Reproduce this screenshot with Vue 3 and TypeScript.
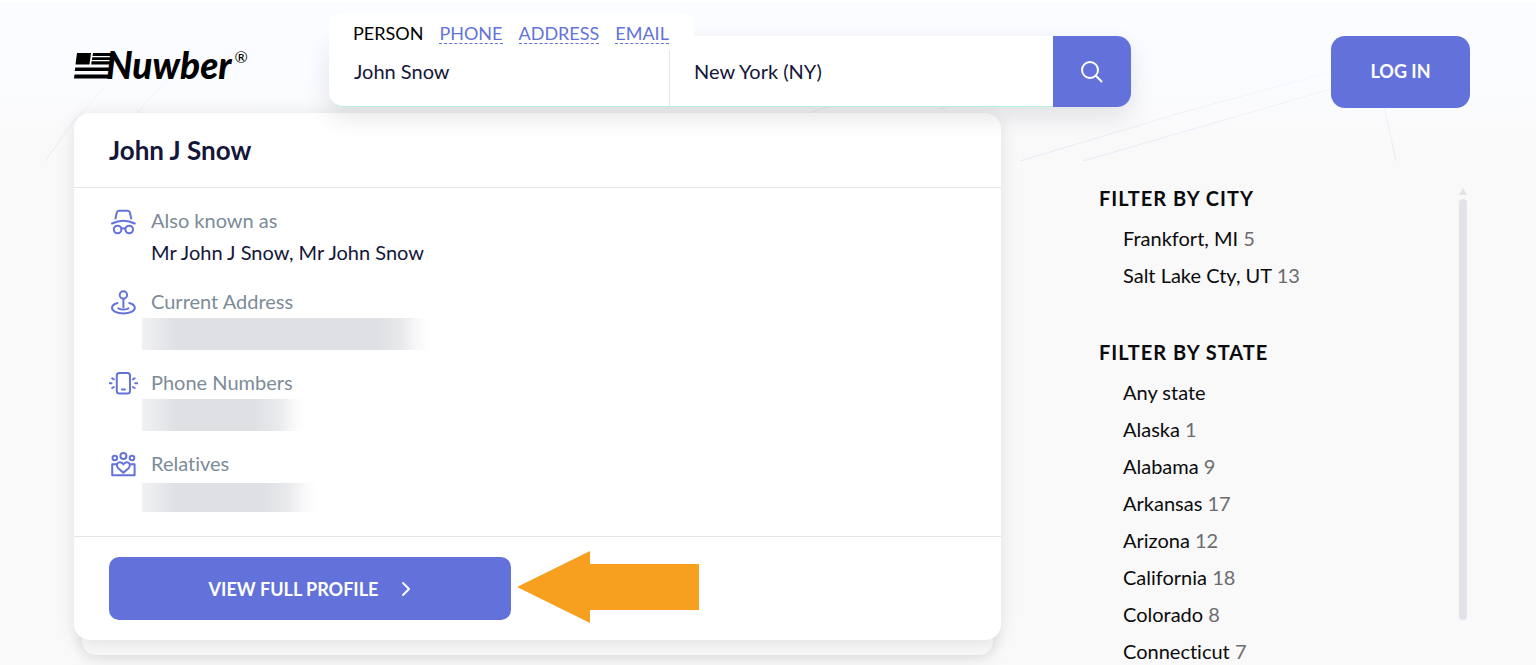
<script setup lang="ts">
import { ref } from 'vue'

interface Filter {
  label: string
  count?: number
}

const person = ref('John Snow')
const region = ref('New York (NY)')

const searchTabs: string[] = ['PHONE', 'ADDRESS', 'EMAIL']

const cities: Filter[] = [
  { label: 'Frankfort, MI', count: 5 },
  { label: 'Salt Lake Cty, UT', count: 13 },
]

const states: Filter[] = [
  { label: 'Any state' },
  { label: 'Alaska', count: 1 },
  { label: 'Alabama', count: 9 },
  { label: 'Arkansas', count: 17 },
  { label: 'Arizona', count: 12 },
  { label: 'California', count: 18 },
  { label: 'Colorado', count: 8 },
  { label: 'Connecticut', count: 7 },
]
</script>

<template>
  <div class="page">
    <svg class="backdrop" viewBox="0 0 1536 170" preserveAspectRatio="none" aria-hidden="true">
      <defs>
        <linearGradient id="trace" gradientUnits="userSpaceOnUse" x1="0" y1="70" x2="0" y2="162">
          <stop offset="0" stop-color="#e6e7f7" stop-opacity="0.2" />
          <stop offset="1" stop-color="#e6e7f7" />
        </linearGradient>
      </defs>
      <path d="M45 161L74 121L106 86M137 113L166 81" />
      <path d="M1020 161L1180 113L1331 72M1083 161L1331 89M1384 106L1396 161" />
      <path d="M800 116L830 106M940 106L950 116" />
    </svg>

    <header class="header">
      <a class="logo" href="#" aria-label="Nuwber">
        <svg class="flag" width="38" height="28" viewBox="0 0 38 28" aria-hidden="true">
          <path d="M3 1H17L15.500 12.500H1.500Z" />
          <path d="M19 1H38V4H18.500ZM18.300 5.300H38V8H17.900ZM17.600 9.300H38V12.500H17.200ZM1.200 15.500H38V19H.8ZM.5 22.500H38V26.500H0Z" />
        </svg>
        <span class="wordmark">Nuwber</span>
        <span class="registered">®</span>
      </a>

      <form class="search" @submit.prevent>
        <nav class="tabs" aria-label="Search type">
          <span class="tab current">PERSON</span>
          <a v-for="tab in searchTabs" :key="tab" class="tab" href="#">{{ tab }}</a>
        </nav>
        <input v-model="person" class="field name" type="text" aria-label="Name" />
        <input v-model="region" class="field region" type="text" aria-label="State" />
        <button class="submit" type="submit" aria-label="Search">
          <svg width="24" height="24" viewBox="0 0 24 24" aria-hidden="true">
            <circle cx="10" cy="10" r="8" />
            <path d="M15.800 15.800L21.500 21.500" />
          </svg>
        </button>
      </form>

      <button class="login" type="button">LOG IN</button>
    </header>

    <main class="content">
      <div class="stack">
        <article class="card">
          <h1 class="person">John J Snow</h1>

          <div class="details">
            <section class="row">
              <svg class="icon" width="29" height="28" viewBox="0 0 29 28" aria-hidden="true">
                <path d="M6.500 11.500L7.800 5.500Q8.200 3.700 10 3.700H18.700Q20.500 3.700 20.900 5.500L22.200 11.500" />
                <path d="M3 16.500Q14.400 11 25.800 16.500" />
                <circle cx="8.600" cy="22.500" r="3.800" />
                <circle cx="20.200" cy="22.500" r="3.800" />
                <path d="M12.400 22Q14.400 20.500 16.400 22" />
              </svg>
              <h2 class="label">Also known as</h2>
              <p class="value">Mr John J Snow, Mr John Snow</p>
            </section>

            <section class="row">
              <svg class="icon" width="29" height="28" viewBox="0 0 29 28" aria-hidden="true">
                <circle cx="14.400" cy="7" r="3.700" />
                <path d="M14.400 10.700V19.300" />
                <path d="M8.500 15Q3 16.600 3 19.800C3 23.200 8 25.500 14.400 25.500S25.800 23.200 25.800 19.800Q25.800 16.600 20.300 15" />
                <path d="M9.300 20.300Q14.400 22.900 19.500 20.300" />
              </svg>
              <h2 class="label">Current Address</h2>
              <div class="hidden-value address"></div>
            </section>

            <section class="row">
              <svg class="icon" width="29" height="28" viewBox="0 0 29 28" aria-hidden="true">
                <rect x="7.800" y="4" width="13.200" height="20.600" rx="2.500" />
                <path d="M12.900 20.500H15.900M3.200 9.400L4.800 10.300M.5 14.200H2.600M3.200 19L4.800 18M25.600 9.400L24 10.300M28.300 14.200H26.200M25.600 19L24 18" />
              </svg>
              <h2 class="label">Phone Numbers</h2>
              <div class="hidden-value phone"></div>
            </section>

            <section class="row">
              <svg class="icon" width="29" height="28" viewBox="0 0 29 28" aria-hidden="true">
                <circle cx="14.400" cy="6" r="3" />
                <circle cx="5.800" cy="8" r="2.300" />
                <circle cx="23" cy="8" r="2.300" />
                <path d="M7.300 14.300H3.200V25.300H25.600V14.300H21.500" />
                <path d="M14.400 22.800L9.200 18.200C6.600 15.400 8.200 12.200 10.900 12.200Q13.300 12.200 14.400 14.400Q15.500 12.200 17.900 12.200C20.600 12.200 22.200 15.400 19.600 18.200Z" />
              </svg>
              <h2 class="label">Relatives</h2>
              <div class="hidden-value relatives"></div>
            </section>
          </div>

          <footer class="actions">
            <button class="view" type="button">
              VIEW FULL PROFILE
              <svg width="10" height="16" viewBox="0 0 10 16" aria-hidden="true">
                <path d="M2 2L8 8L2 14" />
              </svg>
            </button>
            <svg class="arrow" width="182" height="72" viewBox="0 0 182 72" aria-hidden="true">
              <path d="M0 36L73 0V13H182V59H73V72Z" />
            </svg>
          </footer>
        </article>
        <div class="under-card"></div>
      </div>

      <aside class="sidebar">
        <div class="filters">
          <h2 class="filter-title">FILTER BY CITY</h2>
          <ul class="filter-list">
            <li v-for="item in cities" :key="item.label">
              <a href="#">{{ item.label }} <span class="count">{{ item.count }}</span></a>
            </li>
          </ul>
          <h2 class="filter-title">FILTER BY STATE</h2>
          <ul class="filter-list">
            <li v-for="item in states" :key="item.label">
              <a href="#">{{ item.label }} <span v-if="item.count" class="count">{{ item.count }}</span></a>
            </li>
          </ul>
        </div>
        <div class="scroller" aria-hidden="true">
          <svg width="8" height="7" viewBox="0 0 8 7"><path d="M4 0L8 7H0Z" /></svg>
          <div class="thumb"></div>
        </div>
      </aside>
    </main>
  </div>
</template>

<style>
body {
  margin: 0;
}
</style>

<style scoped>
.page {
  position: relative;
  box-sizing: border-box;
  height: 100vh;
  overflow: hidden;
  padding: 36px 66px 0 74px;
  background: linear-gradient(#fff 0, #fff 2px, #fbfcff 3px, #fbfcff 80px, #f9f9f9 150px);
  font-family: Lato, "Liberation Sans", sans-serif;
  font-size: 20px;
  font-variant-ligatures: none;
  color: #14163a;
}

.page * {
  box-sizing: border-box;
}

button,
input {
  margin: 0;
  border: 0;
  font: inherit;
}

a {
  color: inherit;
  text-decoration: none;
}

h1,
h2,
p,
ul {
  margin: 0;
  padding: 0;
}

.backdrop {
  position: absolute;
  top: 0;
  left: 0;
  width: 100%;
  height: 170px;
  fill: none;
  stroke: url(#trace);
  stroke-width: 1;
}

.header {
  position: relative;
  z-index: 2;
  display: flex;
  align-items: flex-start;
}

.logo {
  display: flex;
  flex: 0 0 255px;
  align-items: center;
  height: 60px;
  color: #000;
}

.wordmark {
  margin-left: -6px;
  font-size: 37px;
  font-style: italic;
  font-weight: 900;
  line-height: 40px;
  padding-bottom: 2px;
}

.registered {
  align-self: flex-start;
  margin: 11px 0 0 3px;
  font-size: 16px;
  line-height: 20px;
}

.search {
  position: relative;
  display: flex;
  flex: 0 1 802px;
  height: 71px;
  border-radius: 14px;
  box-shadow: 0 10px 24px rgba(40, 44, 60, 0.12);
}

.tabs {
  position: absolute;
  top: -23px;
  left: 0;
  display: flex;
  gap: 16px;
  height: 37px;
  padding: 8px 25px 0 24px;
  border-radius: 12px 12px 0 0;
  background: #fff;
  font-size: 18px;
}

.tab {
  height: 23px;
  border-bottom: 1px dashed #6473da;
  color: #6473da;
  line-height: 24px;
}

.tab.current {
  border-color: transparent;
  color: #000;
}

.field {
  min-width: 0;
  height: 71px;
  padding: 0 25px;
  border-bottom: 1px solid #b4efe0;
  background: #fff;
  color: #14163a;
}

.name {
  flex: 0 1 340px;
  border-bottom-left-radius: 14px;
}

.region {
  flex: 1 1 384px;
  background: linear-gradient(#e6e7ee, #e6e7ee) 0 14px / 1px 100% no-repeat #fff;
}

.submit {
  display: flex;
  flex: 0 0 78px;
  align-items: center;
  justify-content: center;
  border-radius: 0 14px 14px 0;
  background: #6272da;
}

.submit svg,
.view svg {
  fill: none;
  stroke: #fff;
  stroke-width: 2;
  stroke-linecap: round;
  stroke-linejoin: round;
}

.login {
  flex: 0 0 139px;
  height: 72px;
  margin-left: auto;
  padding: 0 0 2px;
  border-radius: 14px;
  background: #6272da;
  color: #fff;
  font-size: 18px;
  font-weight: 700;
}

.content {
  position: relative;
  z-index: 1;
  display: grid;
  grid-template-columns: 927fr 371fr;
  gap: 98px;
  align-items: start;
  margin-top: 5px;
}

.card {
  position: relative;
  z-index: 1;
  border-radius: 16px;
  background: #fff;
  box-shadow: 0 2px 18px rgba(0, 0, 0, 0.1);
}

.person {
  padding: 17px 35px 16px;
  border-bottom: 1px solid #e4e5e7;
  font-size: 26px;
  font-weight: 700;
  line-height: 41px;
}

.details {
  display: grid;
  gap: 17px;
  padding: 17px 35px 24px;
}

.row {
  display: grid;
  grid-template-columns: 29px 1fr;
  grid-template-rows: 32px 32px;
  column-gap: 13px;
}

.icon {
  grid-row: span 2;
  margin-top: 2px;
  fill: none;
  stroke: #6473da;
  stroke-width: 2;
  stroke-linecap: round;
  stroke-linejoin: round;
}

.label {
  color: #7d8b99;
  font-size: 20px;
  font-weight: 400;
  line-height: 30px;
}

.value {
  line-height: 30px;
}

.hidden-value {
  height: 32px;
  margin-left: -9px;
  background: linear-gradient(90deg, #f1f1f3 0, #ebecee 12px, #dfe0e4 34px, #dfe0e4 calc(100% - 52px), #e9eaec calc(100% - 28px), #f9f9fa calc(100% - 12px), #fff 100%);
}

.address {
  width: 288px;
}

.phone {
  width: 164px;
}

.relatives {
  align-self: end;
  width: 174px;
  height: 29px;
}

.actions {
  display: flex;
  gap: 6px;
  align-items: center;
  padding: 20px 35px;
  border-top: 1px solid #e4e5e7;
}

.view {
  display: flex;
  flex: 0 1 402px;
  gap: 23px;
  align-items: center;
  justify-content: center;
  height: 63px;
  border-radius: 10px;
  background: #6272da;
  color: #fff;
  font-size: 18px;
  font-weight: 700;
}

.arrow {
  flex: none;
  margin: -8px 0 -4px;
  fill: #f7a01f;
}

.under-card {
  height: 30px;
  margin: -15px 8px 0;
  border-radius: 14px;
  background: #f8f8f8;
  box-shadow: 0 2px 16px rgba(0, 0, 0, 0.14);
}

.sidebar {
  display: flex;
  justify-content: space-between;
  margin-top: 69px;
  padding-right: 3px;
  color: #0b0b0d;
}

.filter-title {
  font-size: 20px;
  font-weight: 700;
  letter-spacing: 1px;
  line-height: 32px;
}

.filter-list {
  margin-bottom: 42px;
  padding: 6px 0 0 24px;
  line-height: 37px;
  list-style: none;
}

.count {
  color: #6c6c70;
}

.scroller {
  display: flex;
  flex-direction: column;
  gap: 4px;
  margin-top: 6px;
  fill: #e2e3e8;
}

.thumb {
  width: 8px;
  height: 421px;
  border-radius: 4px;
  background: #e2e3e8;
}
</style>
